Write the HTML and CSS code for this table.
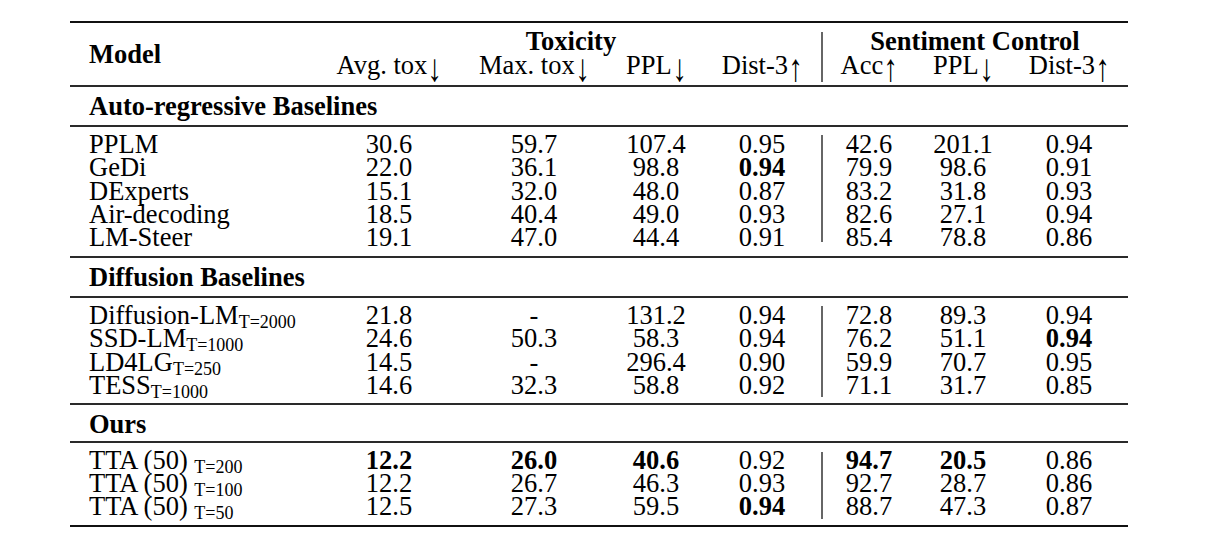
FILE: index.html
```html
<!DOCTYPE html>
<html>
<head>
<meta charset="utf-8">
<link rel="stylesheet" href="styles.css">
</head>
<body>
<div class="tbl">
  <div class="head">
    <div class="grid grid-head">
      <div class="vr vr-head"></div>
      <div class="model-hd">Model</div>
      <div class="group group-tox">Toxicity</div>
      <div class="group group-sent">Sentiment Control</div>
      <div class="c">Avg. tox<span class="arr">↓</span></div>
      <div class="c">Max. tox<span class="arr">↓</span></div>
      <div class="c">PPL<span class="arr">↓</span></div>
      <div class="c">Dist-3<span class="arr">↑</span></div>
      <div class="c">Acc<span class="arr">↑</span></div>
      <div class="c">PPL<span class="arr">↓</span></div>
      <div class="c">Dist-3<span class="arr">↑</span></div>
    </div>
  </div>

  <div class="sect">Auto-regressive Baselines</div>
  <div class="body">
    <div class="grid rows5">
      <div class="vr vr-auto"></div>
      <div class="m">PPLM</div><div class="c">30.6</div><div class="c">59.7</div><div class="c">107.4</div><div class="c">0.95</div><div class="c">42.6</div><div class="c">201.1</div><div class="c">0.94</div>
      <div class="m">GeDi</div><div class="c">22.0</div><div class="c">36.1</div><div class="c">98.8</div><div class="c b">0.94</div><div class="c">79.9</div><div class="c">98.6</div><div class="c">0.91</div>
      <div class="m">DExperts</div><div class="c">15.1</div><div class="c">32.0</div><div class="c">48.0</div><div class="c">0.87</div><div class="c">83.2</div><div class="c">31.8</div><div class="c">0.93</div>
      <div class="m">Air-decoding</div><div class="c">18.5</div><div class="c">40.4</div><div class="c">49.0</div><div class="c">0.93</div><div class="c">82.6</div><div class="c">27.1</div><div class="c">0.94</div>
      <div class="m">LM-Steer</div><div class="c">19.1</div><div class="c">47.0</div><div class="c">44.4</div><div class="c">0.91</div><div class="c">85.4</div><div class="c">78.8</div><div class="c">0.86</div>
    </div>
  </div>

  <div class="sect">Diffusion Baselines</div>
  <div class="body">
    <div class="grid rows4">
      <div class="vr vr-diff"></div>
      <div class="m">Diffusion-LM<span class="sub">T=2000</span></div><div class="c">21.8</div><div class="c">-</div><div class="c">131.2</div><div class="c">0.94</div><div class="c">72.8</div><div class="c">89.3</div><div class="c">0.94</div>
      <div class="m">SSD-LM<span class="sub">T=1000</span></div><div class="c">24.6</div><div class="c">50.3</div><div class="c">58.3</div><div class="c">0.94</div><div class="c">76.2</div><div class="c">51.1</div><div class="c b">0.94</div>
      <div class="m">LD4LG<span class="sub">T=250</span></div><div class="c">14.5</div><div class="c">-</div><div class="c">296.4</div><div class="c">0.90</div><div class="c">59.9</div><div class="c">70.7</div><div class="c">0.95</div>
      <div class="m">TESS<span class="sub">T=1000</span></div><div class="c">14.6</div><div class="c">32.3</div><div class="c">58.8</div><div class="c">0.92</div><div class="c">71.1</div><div class="c">31.7</div><div class="c">0.85</div>
    </div>
  </div>

  <div class="sect sect-ours">Ours</div>
  <div class="body body-last">
    <div class="grid rows3">
      <div class="vr vr-ours"></div>
      <div class="m">TTA (50) <span class="sub">T=200</span></div><div class="c b">12.2</div><div class="c b">26.0</div><div class="c b">40.6</div><div class="c">0.92</div><div class="c b">94.7</div><div class="c b">20.5</div><div class="c">0.86</div>
      <div class="m">TTA (50) <span class="sub">T=100</span></div><div class="c">12.2</div><div class="c">26.7</div><div class="c">46.3</div><div class="c">0.93</div><div class="c">92.7</div><div class="c">28.7</div><div class="c">0.86</div>
      <div class="m">TTA (50) <span class="sub">T=50</span></div><div class="c">12.5</div><div class="c">27.3</div><div class="c">59.5</div><div class="c b">0.94</div><div class="c">88.7</div><div class="c">47.3</div><div class="c">0.87</div>
    </div>
  </div>
</div>
</body>
</html>
```

FILE: styles.css
```css
html, body {
  margin: 0;
  padding: 0;
  background: #ffffff;
}

body {
  font-family: "Liberation Serif", "Times New Roman", serif;
  color: #000;
}

.tbl {
  width: 1058px;
  margin: 21px 0 0 70px;
  border-top: 2px solid #111;
  border-bottom: 2px solid #111;
  font-size: 26.5px;
}

.grid {
  display: grid;
  grid-template-columns: 250px 138px 152px 92px 120px 0 94px 94px 118px;
  line-height: 23.33px;
}

.head {
  padding: 6px 0 7px;
  border-bottom: 2px solid #2a2a2a;
}

.grid-head {
  grid-template-rows: 24.4px 24.4px;
  line-height: 24.4px;
}

.model-hd {
  grid-row: span 2;
  align-self: center;
  padding: 2px 0 0 19px;
  font-weight: 700;
}

.group {
  font-weight: 700;
  text-align: center;
}

.group-tox {
  grid-column: span 4;
}

.group-sent {
  grid-column: span 3;
}

.arr {
  display: inline-block;
  margin-left: 1px;
  transform: scale(1.1, 1.45);
  transform-origin: 50% 20%;
}

.sect {
  padding: 8px 0 7px 19px;
  line-height: 23.33px;
  font-weight: 700;
  border-bottom: 2px solid #2a2a2a;
}

.sect-ours {
  padding-bottom: 4px;
}

.body {
  padding: 6px 0 6px;
  border-bottom: 2px solid #2a2a2a;
}

.body-last {
  border-bottom: none;
  padding-bottom: 6px;
}

.rows5 { grid-template-rows: repeat(5, 23.33px); }
.rows4 { grid-template-rows: repeat(4, 23.33px); }
.rows3 { grid-template-rows: repeat(3, 23.33px); }

.m {
  padding-left: 19px;
  white-space: nowrap;
}

.c {
  text-align: center;
  white-space: nowrap;
}

.b {
  font-weight: 700;
}

.sub {
  font-size: 18px;
  line-height: 0;
  vertical-align: -4px;
}

.vr {
  grid-column: 6;
  grid-row: 1 / -1;
  justify-self: start;
  width: 2px;
  background: #666;
}

.vr-head { margin: 3px 0 -4px -1px; }
.vr-auto { margin: 2px 0 8px -1px; }
.vr-diff { margin: 2px 0 0 -1px; }
.vr-ours { margin: 3px 0 0 -1px; }
```
